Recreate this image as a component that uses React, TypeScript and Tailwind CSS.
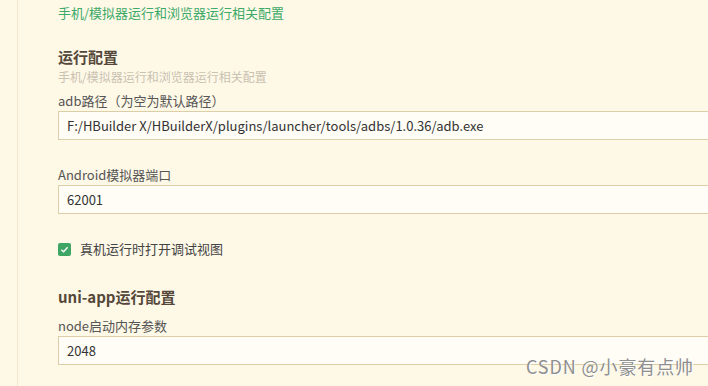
const font = { fontFamily: '"Noto Sans CJK SC", "Noto Sans", sans-serif' };

function Field({ label, value }: { label: string; value: string }) {
  return (
    <div>
      <div className="h-[20px] text-[13px] leading-[20px] text-[#555]">{label}</div>
      <div className="h-[29px] border border-r-0 border-[#dccfa8] bg-[#fffdf6] pl-[8px] text-[13px] leading-[27px] text-[#333] whitespace-nowrap">
        {value}
      </div>
    </div>
  );
}

export default function App() {
  return (
    <div className="flex h-[386px] w-[708px] overflow-hidden bg-[#fef8e7] relative" style={font}>
      <div className="w-[18px] shrink-0 border-r border-[#f1e8cf]" />
      <div className="flex-1 pl-[40px]">
        <div className="mt-[3px] h-[20px] text-[13px] leading-[20px] text-[#3daa68]">手机/模拟器运行和浏览器运行相关配置</div>

        <div className="mt-[24px] h-[20px] text-[15px] font-bold leading-[20px] text-[#55483a]">运行配置</div>
        <div className="mt-[1px] h-[18px] text-[12px] leading-[18px] text-[#c9c2b1]">手机/模拟器运行和浏览器运行相关配置</div>

        <div className="mt-[5px]">
          <Field label="adb路径（为空为默认路径）" value="F:/HBuilder X/HBuilderX/plugins/launcher/tools/adbs/1.0.36/adb.exe" />
        </div>
        <div className="mt-[25px]">
          <Field label="Android模拟器端口" value="62001" />
        </div>

        <div className="mt-[25px] flex items-center gap-[9px]">
          <div className="flex h-[13px] w-[13px] items-center justify-center rounded-[2px] bg-[#3fa564]">
            <svg width="9" height="9" viewBox="0 0 10 10" fill="none">
              <path d="M1.5 5.2 L4 7.5 L8.5 2.5" stroke="#fff" strokeWidth="1.5" />
            </svg>
          </div>
          <span className="text-[13px] leading-[20px] text-[#444]">真机运行时打开调试视图</span>
        </div>

        <div className="mt-[28px] h-[20px] text-[15px] font-bold leading-[20px] text-[#55483a]">uni-app运行配置</div>
        <div className="mt-[9px]">
          <Field label="node启动内存参数" value="2048" />
        </div>
      </div>
      <div className="absolute right-[14px] bottom-[9px] text-[18px] leading-[22px] tracking-[0.9px] text-[#8f8f8f] [text-shadow:1px_1px_0_#fff]" style={{ fontFamily: '"Noto Sans CJK SC", sans-serif' }}>
        CSDN @小豪有点帅
      </div>
    </div>
  );
}
